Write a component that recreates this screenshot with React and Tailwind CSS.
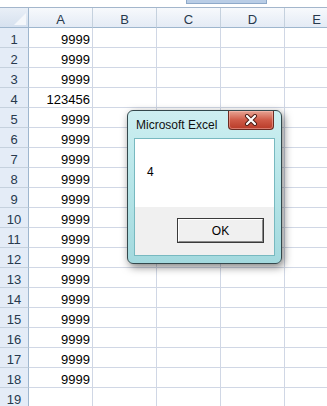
import React from "react";

const cols = ["A", "B", "C", "D", "E"];
const values = [
  "9999", "9999", "9999", "123456", "9999", "9999", "9999", "9999", "9999",
  "9999", "9999", "9999", "9999", "9999", "9999", "9999", "9999", "9999", "",
];

const Corner = () => (
  <div className="w-[29px] h-[20px] shrink-0 border-r border-b border-[#9eb6ce] bg-gradient-to-b from-[#e9eff7] to-[#d6e1ef] flex items-end justify-end pr-[2px] pb-[2px]">
    <svg width="12" height="12" viewBox="0 0 12 12">
      <polygon points="12,0 12,12 0,12" fill="#f4f7fb" />
    </svg>
  </div>
);

const HeaderRow = () => (
  <div className="flex h-[20px]">
    <Corner />
    {cols.map((c) => (
      <div
        key={c}
        className="w-[64px] h-[20px] shrink-0 border-r border-b border-r-[#c5d1de] border-b-[#9eb6ce] bg-gradient-to-b from-[#f7f9fc] to-[#e4ebf5] flex items-end justify-center leading-[15px] text-[13px] text-[#27394d]"
      >
        {c}
      </div>
    ))}
  </div>
);

const Row = ({ n, value }) => (
  <div className="flex h-[20px]">
    <div className="w-[29px] h-[20px] shrink-0 border-r border-b border-r-[#9eb6ce] border-b-[#c5d1de] bg-[#e4ecf7] flex items-end justify-center leading-[15px] text-[13px] text-[#27394d]">
      {n}
    </div>
    {cols.map((c) => (
      <div
        key={c}
        className="w-[64px] h-[20px] shrink-0 border-r border-b border-[#d0d7e5] flex items-end justify-end pr-[2px] leading-[15px] text-[13px] text-black"
      >
        {c === "A" ? value : ""}
      </div>
    ))}
  </div>
);

const CloseButton = () => (
  <div className="w-[46px] h-[19px] rounded-b-[4px] border border-t-0 border-[#6b2b22] bg-gradient-to-b from-[#e6a494] via-[#cf5a47] to-[#b83a28] flex items-center justify-center shadow-[inset_0_0_0_1px_rgba(255,200,190,0.45)]">
    <svg width="14" height="12" viewBox="0 0 14 12">
      <path d="M3 2 L11 10 M11 2 L3 10" stroke="#4a1a12" strokeWidth="4" strokeLinecap="round" />
      <path d="M3 2 L11 10 M11 2 L3 10" stroke="#ffffff" strokeWidth="2.2" strokeLinecap="round" />
    </svg>
  </div>
);

const MessageBox = () => (
  <div className="absolute left-[127px] top-[110px] w-[155px] h-[154px] rounded-[6px] border border-[#34484c] bg-gradient-to-b from-[#cdeff1] via-[#b6e5e8] to-[#a3d9de] shadow-[2px_3px_8px_rgba(0,0,0,0.5)] flex flex-col pl-[6px] pr-[6px] pb-[7px]">
    <div className="h-[27px] flex items-start justify-between shrink-0">
      <span className="text-[12px] leading-[14px] text-[#111] pt-[7px] pl-[2px]">Microsoft Excel</span>
      <div className="mr-[1px]">
        <CloseButton />
      </div>
    </div>
    <div className="flex-1 flex flex-col border border-[#78b9c0]">
      <div className="h-[68px] bg-white pl-[12px] pt-[26px] text-[12px] leading-[14px] text-black">
        4
      </div>
      <div className="flex-1 bg-[#f0f0f0] flex items-start justify-end pt-[11px] pr-[10px]">
        <div className="w-[87px] h-[25px] border border-[#3a3a3a] bg-[#f0f0f0] flex">
          <div className="flex-1 border border-t-white border-l-white border-r-[#8a8a8a] border-b-[#8a8a8a] flex items-center justify-center text-[12px] text-black">
            OK
          </div>
        </div>
      </div>
    </div>
  </div>
);

export default function App() {
  return (
    <div
      className="relative w-[327px] h-[406px] overflow-hidden bg-white"
      style={{ fontFamily: '"Liberation Sans", Arial, sans-serif' }}
    >
      <div className="h-[8px] border-b border-[#a3b6cc] pl-[186px]">
        <div className="w-[81px] h-[4px] bg-[#b9cde6] border-b border-x border-[#8ea9c9]" />
      </div>
      <HeaderRow />
      {values.map((v, i) => (
        <Row key={i} n={i + 1} value={v} />
      ))}
      <MessageBox />
    </div>
  );
}
